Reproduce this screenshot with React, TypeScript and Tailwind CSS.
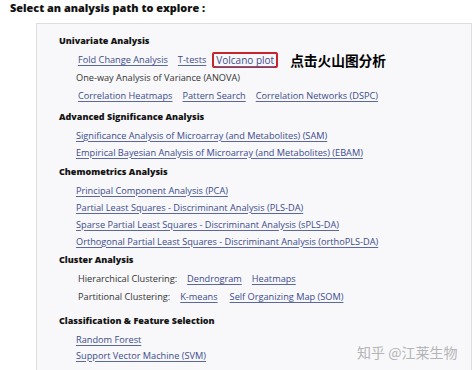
const LINK = "text-[#3b4b8c] underline underline-offset-2 decoration-[#5a67a0]";

function Heading({ children, className = "" }: { children: React.ReactNode; className?: string }) {
  return (
    <div className={`flex h-[18px] items-center text-[9px] font-extrabold text-[#141414] ${className}`}>
      {children}
    </div>
  );
}

function Row({
  children,
  h = "h-[17px]",
  pl = "pl-[17px]",
  className = "",
}: {
  children: React.ReactNode;
  h?: string;
  pl?: string;
  className?: string;
}) {
  return <div className={`flex items-center gap-[10px] ${h} ${pl} text-[9.2px] ${className}`}>{children}</div>;
}

export default function App() {
  return (
    <div
      className="relative h-[370px] w-[474px] overflow-hidden bg-white"
      style={{ fontFamily: '"Open Sans", "Noto Sans CJK SC", sans-serif' }}
    >
      <h1 className="pl-[10px] text-[10.9px] leading-[16px] font-extrabold text-[#111]">
        Select an analysis path to explore :
      </h1>

      <div className="mt-[7px] ml-[36px] h-[400px] w-[436px] border border-[#dedee2] bg-[#f8f8fa] pt-[8px] pl-[22px]">
        {/* Univariate */}
        <Heading>Univariate Analysis</Heading>
        <Row h="h-[18px]" pl="pl-[19px]" className="mt-[1px]">
          <a className={LINK}>Fold Change Analysis</a>
          <a className={LINK}>T-tests</a>
          <span className="-ml-[4px] rounded-[2px] border-2 border-[#c3262c] px-[2px] text-[10px] leading-[12px]">
            <a className={LINK}>Volcano plot</a>
          </span>
          <span
            className="ml-[2px] text-[13.7px] font-bold text-black"
            style={{ fontFamily: '"Noto Sans CJK SC", serif' }}
          >
            点击火山图分析
          </span>
        </Row>
        <Row h="h-[18px]">
          <span className="text-[#333]">One-way Analysis of Variance (ANOVA)</span>
        </Row>
        <Row h="h-[18px]" pl="pl-[19px]">
          <a className={LINK}>Correlation Heatmaps</a>
          <a className={LINK}>Pattern Search</a>
          <a className={LINK}>Correlation Networks (DSPC)</a>
        </Row>

        {/* Advanced */}
        <Heading className="mt-[3px]">Advanced Significance Analysis</Heading>
        <Row className="mt-[1px]">
          <a className={LINK}>Significance Analysis of Microarray (and Metabolites) (SAM)</a>
        </Row>
        <Row>
          <a className={LINK}>Empirical Bayesian Analysis of Microarray (and Metabolites) (EBAM)</a>
        </Row>

        {/* Chemometrics */}
        <Heading className="mt-[2px]">Chemometrics Analysis</Heading>
        <Row className="mt-[1px]">
          <a className={LINK}>Principal Component Analysis (PCA)</a>
        </Row>
        <Row>
          <a className={LINK}>Partial Least Squares - Discriminant Analysis (PLS-DA)</a>
        </Row>
        <Row>
          <a className={LINK}>Sparse Partial Least Squares - Discriminant Analysis (sPLS-DA)</a>
        </Row>
        <Row>
          <a className={LINK}>Orthogonal Partial Least Squares - Discriminant Analysis (orthoPLS-DA)</a>
        </Row>

        {/* Cluster */}
        <Heading className="mt-[1px]">Cluster Analysis</Heading>
        <Row h="h-[18px]" pl="pl-[19px]" className="mt-[1px] gap-[8px]">
          <span className="text-[#333]">Hierarchical Clustering:</span>
          <a className={LINK}>Dendrogram</a>
          <a className={LINK}>Heatmaps</a>
        </Row>
        <Row h="h-[18px]" pl="pl-[19px]" className="gap-[8px]">
          <span className="text-[#333]">Partitional Clustering:</span>
          <a className={LINK}>K-means</a>
          <a className={`${LINK} ml-[2px]`}>Self Organizing Map (SOM)</a>
        </Row>

        {/* Classification */}
        <Heading className="mt-[6px]">Classification &amp; Feature Selection</Heading>
        <Row className="mt-[1px]">
          <a className={LINK}>Random Forest</a>
        </Row>
        <Row h="h-[15px]">
          <a className={LINK}>Support Vector Machine (SVM)</a>
        </Row>
      </div>

      <div
        className="absolute top-[342px] left-[357px] text-[14px] leading-[20px] text-[#b4b4b8]"
        style={{ fontFamily: '"Noto Sans CJK SC", sans-serif' }}
      >
        知乎 @江莱生物
      </div>
    </div>
  );
}
